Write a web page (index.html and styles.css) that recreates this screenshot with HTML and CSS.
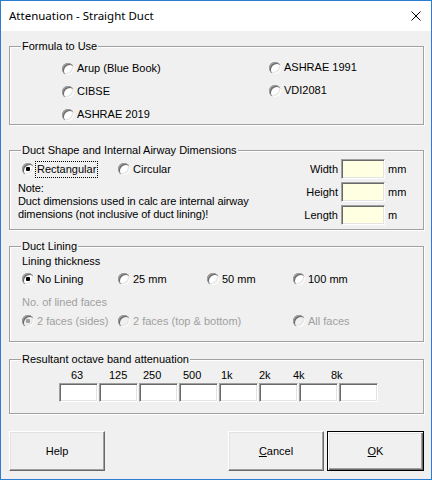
FILE: index.html
```html
<!DOCTYPE html>
<html>
<head>
<meta charset="utf-8">
<link rel="stylesheet" href="styles.css">
</head>
<body>
<div class="window">
  <div class="titlebar">
    <span class="title">Attenuation - Straight Duct</span>
    <svg class="close" width="10" height="10" viewBox="0 0 10 10"><path d="M0.5 0.5L9.5 9.5M9.5 0.5L0.5 9.5" stroke="#000" stroke-width="1" fill="none"/></svg>
  </div>
  <div class="content">
    <div class="frame frame-formula">
      <span class="legend">Formula to Use</span>
      <div class="formula">
        <div class="col col-left">
          <div class="opt"><span class="radio"></span>Arup (Blue Book)</div>
          <div class="opt"><span class="radio"></span>CIBSE</div>
          <div class="opt"><span class="radio"></span>ASHRAE 2019</div>
        </div>
        <div class="col col-right">
          <div class="opt"><span class="radio"></span>ASHRAE 1991</div>
          <div class="opt"><span class="radio"></span>VDI2081</div>
        </div>
      </div>
    </div>

    <div class="frame frame-shape">
      <span class="legend">Duct Shape and Internal Airway Dimensions</span>
      <div class="shape">
        <div class="shape-left">
          <div class="shape-radios">
            <div class="opt opt-rect"><span class="radio checked"></span><span class="focus">Rectangular</span></div>
            <div class="opt"><span class="radio"></span>Circular</div>
          </div>
          <div class="note">Note:<br>Duct dimensions used in calc are internal airway<br>dimensions (not inclusive of duct lining)!</div>
        </div>
        <div class="dims">
          <span class="dim-label">Width</span><input class="field field-yellow" type="text"><span class="unit">mm</span>
          <span class="dim-label">Height</span><input class="field field-yellow" type="text"><span class="unit">mm</span>
          <span class="dim-label">Length</span><input class="field field-yellow" type="text"><span class="unit">m</span>
        </div>
      </div>
    </div>

    <div class="frame frame-lining">
      <span class="legend">Duct Lining</span>
      <div class="lining">
        <div class="caption">Lining thickness</div>
        <div class="row4">
          <div class="opt"><span class="radio checked"></span>No Lining</div>
          <div class="opt"><span class="radio"></span>25 mm</div>
          <div class="opt"><span class="radio"></span>50 mm</div>
          <div class="opt"><span class="radio"></span>100 mm</div>
        </div>
        <div class="caption caption-faces disabled-text">No. of lined faces</div>
        <div class="row4 disabled-text">
          <div class="opt"><span class="radio checked disabled"></span>2 faces (sides)</div>
          <div class="opt span2"><span class="radio disabled"></span>2 faces (top &amp; bottom)</div>
          <div class="opt"><span class="radio disabled"></span>All faces</div>
        </div>
      </div>
    </div>

    <div class="frame frame-octave">
      <span class="legend">Resultant octave band attenuation</span>
      <div class="octave">
        <div class="oct-labels">
          <span>63</span><span>125</span><span>250</span><span>500</span><span>1k</span><span>2k</span><span>4k</span><span>8k</span>
        </div>
        <div class="oct-boxes">
          <input class="field oct-box" type="text"><input class="field oct-box" type="text"><input class="field oct-box" type="text"><input class="field oct-box" type="text"><input class="field oct-box" type="text"><input class="field oct-box" type="text"><input class="field oct-box" type="text"><input class="field oct-box" type="text">
        </div>
      </div>
    </div>

    <div class="buttons">
      <button class="btn" type="button">Help</button>
      <div class="btn-group">
        <button class="btn" type="button"><u>C</u>ancel</button>
        <button class="btn btn-default" type="button"><u>O</u>K</button>
      </div>
    </div>
  </div>
</div>
</body>
</html>
```
FILE: styles.css
```css
* { box-sizing: border-box; }

body {
  margin: 0;
  font-family: "Liberation Sans", Arial, sans-serif;
  font-size: 11px;
  line-height: 13px;
  color: #000;
}

.window {
  width: 432px;
  height: 480px;
  border: 1px solid #2b7cd3;
  background: #f0f0f0;
  display: flex;
  flex-direction: column;
}

.titlebar {
  height: 30px;
  flex: none;
  background: #fff;
  display: flex;
  align-items: center;
  justify-content: space-between;
  padding: 0 10px 0 8px;
}

.title {
  font-family: "Noto Sans", "Open Sans", sans-serif;
  font-size: 11.5px;
  line-height: 16px;
}

.close { display: block; }

.content {
  padding: 15px 7px 0 8px;
  display: flex;
  flex-direction: column;
}

.frame {
  position: relative;
  border: 1px solid #a0a0a0;
  box-shadow: 1px 1px 0 #fff, inset 1px 1px 0 #fff;
  flex: none;
}

.legend {
  position: absolute;
  top: -7px;
  left: 11px;
  padding: 0 1px;
  background: #f0f0f0;
  white-space: nowrap;
}

.frame-formula { height: 79px; }
.frame-shape { height: 80px; margin-top: 25px; }
.frame-lining { height: 96px; margin-top: 16px; }
.frame-octave { height: 55px; margin-top: 17px; }

/* radio buttons */
.opt {
  display: flex;
  align-items: center;
  white-space: nowrap;
  height: 23px;
}

.radio {
  position: relative;
  flex: none;
  width: 12px;
  height: 12px;
  margin-right: 3px;
  border-radius: 50%;
  background: #fff;
  box-shadow:
    inset 1px 1px 0 #a0a0a0,
    inset 2px 2px 0 #696969,
    inset -1px -1px 0 #fff,
    inset -2px -2px 0 #e3e3e3;
}

.radio.checked::after {
  content: "";
  position: absolute;
  left: 4px;
  top: 4px;
  width: 4px;
  height: 4px;
  border-radius: 1px;
  background: #000;
}

.radio.disabled { background: #f0f0f0; }
.radio.disabled.checked::after { background: #a0a0a0; }

/* formula frame */
.formula {
  display: flex;
  padding: 10px 0 0 52px;
}

.col { display: flex; flex-direction: column; }
.col-left { width: 207px; }
.col-right { margin-top: -1px; }

/* shape frame */
.shape {
  display: flex;
  justify-content: space-between;
  padding: 8px 0 0 8px;
}

.shape-radios {
  display: flex;
  margin-left: 4px;
}

.shape-radios .opt { height: 20px; }
.opt-rect { width: 96px; }

.focus {
  border: 1px dotted #000;
  padding: 1px;
  margin-left: -2px;
}

.note { margin-top: 3px; letter-spacing: -0.1px; }

.dims {
  display: grid;
  grid-template-columns: auto 44px 35px;
  grid-auto-rows: 20px;
  column-gap: 3px;
  row-gap: 3px;
  align-items: center;
}

.dim-label { text-align: right; }

.field {
  display: block;
  margin: 0;
  padding: 0;
  font: inherit;
  outline: none;
  border: 1px solid;
  border-color: #a0a0a0 #fff #fff #a0a0a0;
  box-shadow: inset 1px 1px 0 #696969, inset -1px -1px 0 #e3e3e3;
  background: #fff;
}

.field-yellow {
  width: 44px;
  height: 20px;
  background: #ffffe1;
}

/* lining frame */
.lining { padding: 8px 0 0 12px; }

.caption { height: 13px; }
.caption-faces { margin-top: 6px; }

.row4 {
  display: grid;
  grid-template-columns: 96px 89px 86px auto;
  height: 22px;
}

.row4 .opt { height: 22px; }
.row4 + .caption-faces + .row4 { margin-top: 1px; }
.span2 { grid-column: span 2; }

.disabled-text { color: #a0a0a0; }

/* octave frame */
.octave { padding: 9px 0 0 49px; }

.oct-labels {
  display: flex;
  height: 13px;
}

.oct-labels span {
  flex: none;
  width: 40px;
  white-space: nowrap;
}

.oct-labels span:nth-child(1) { text-indent: 12px; }
.oct-labels span:nth-child(2) { text-indent: 10px; }
.oct-labels span:nth-child(3) { text-indent: 4px; }
.oct-labels span:nth-child(4) { text-indent: 4px; }
.oct-labels span:nth-child(5) { text-indent: 2px; }
.oct-labels span:nth-child(6) { text-indent: 0; }
.oct-labels span:nth-child(7) { text-indent: -6px; }
.oct-labels span:nth-child(8) { text-indent: -8px; }

.oct-boxes {
  display: flex;
  gap: 1px;
  margin-top: 1px;
}

.oct-box {
  width: 39px;
  height: 19px;
}

/* buttons */
.buttons {
  margin-top: 17px;
  height: 40px;
  display: flex;
  justify-content: space-between;
  flex: none;
}

.btn-group { display: flex; gap: 3px; }

.btn {
  width: 96px;
  height: 40px;
  margin: 0;
  padding: 0;
  font: inherit;
  color: #000;
  background: #f0f0f0;
  border: 1px solid;
  border-color: #fff #696969 #696969 #fff;
  box-shadow: inset -1px -1px 0 #a0a0a0, inset 1px 1px 0 #e3e3e3;
}

.btn-default {
  width: 97px;
  border: 1px solid #000;
  box-shadow: inset 1px 1px 0 #fff, inset -1px -1px 0 #696969, inset -2px -2px 0 #a0a0a0, inset 2px 2px 0 #e3e3e3;
}
```
